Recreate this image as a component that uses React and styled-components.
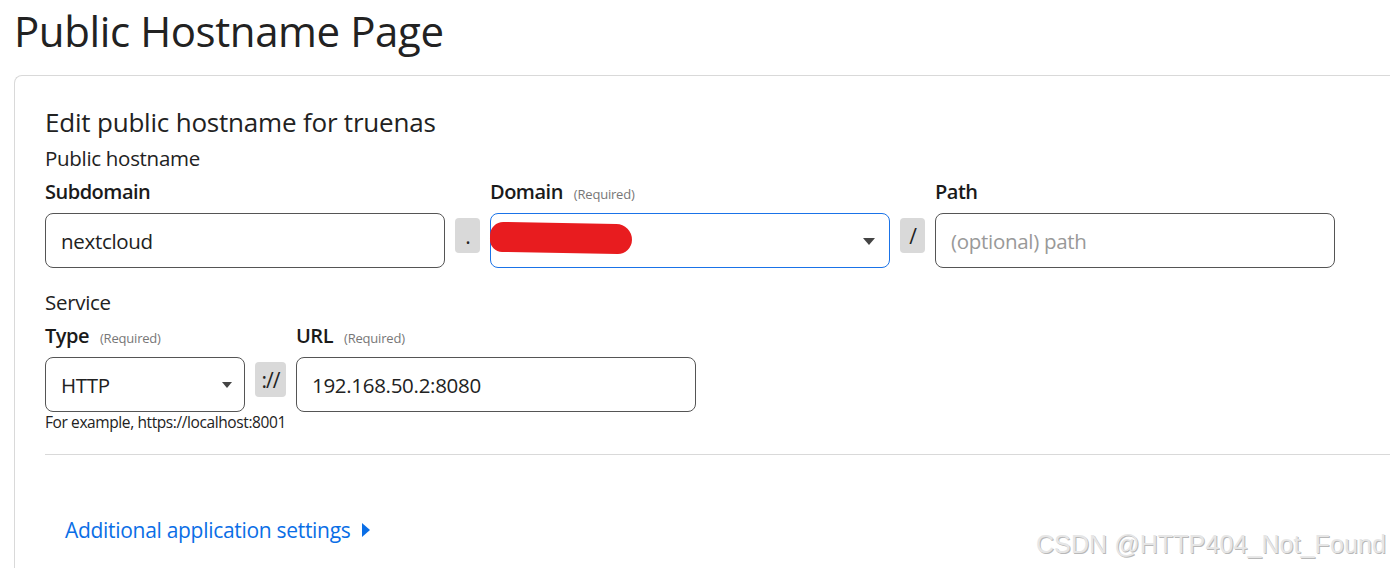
import React from 'react';
import styled, { createGlobalStyle } from 'styled-components';

const GlobalStyle = createGlobalStyle`
  html, body {
    margin: 0;
    padding: 0;
    background: #fff;
    overflow: hidden;
  }
  body {
    font-family: "Open Sans", "Noto Sans", sans-serif;
    color: #222;
  }
`;

const Page = styled.div`
  position: relative;
  width: 1390px;
  height: 568px;
  padding: 0 0 0 14px;
  box-sizing: border-box;
  overflow: hidden;
`;

const Title = styled.h1`
  margin: 0;
  padding: 3px 0 0 0;
  height: 75px;
  box-sizing: border-box;
  font-size: 42px;
  font-weight: 400;
  letter-spacing: -0.4px;
  color: #222;
  line-height: 56px;
`;

const Card = styled.div`
  border: 1px solid #d9d9d9;
  border-right: none;
  border-bottom: none;
  border-top-left-radius: 8px;
  padding: 27px 0 0 30px;
  height: 500px;
  box-sizing: border-box;
`;

const CardTitle = styled.h2`
  margin: 0 0 2px 0;
  font-size: 26px;
  font-weight: 400;
  letter-spacing: -0.2px;
  line-height: 38px;
  color: #222;
`;

const SectionLabel = styled.div`
  margin-top: ${p => p.$top || 0}px;
  font-size: 20.5px;
  line-height: 30px;
  letter-spacing: -0.3px;
  color: #222;
`;

const Row = styled.div`
  display: flex;
  align-items: flex-start;
  gap: 10px;
  margin-top: ${p => p.$top || 0}px;
`;

const Field = styled.div`
  display: flex;
  flex-direction: column;
  width: ${p => p.$w}px;
`;

const Label = styled.label`
  display: flex;
  align-items: baseline;
  gap: 11px;
  height: 28px;
  margin-bottom: 7px;
  font-size: 20px;
  font-weight: 600;
  letter-spacing: -0.5px;
  line-height: 28px;
  color: #1a1a1a;
`;

const Required = styled.span`
  font-size: 13px;
  font-weight: 400;
  letter-spacing: -0.2px;
  color: #777;
`;

const Box = styled.div`
  position: relative;
  display: flex;
  align-items: center;
  height: 55px;
  box-sizing: border-box;
  padding: 0 15px;
  border: 1px solid ${p => (p.$focus ? '#1a73e8' : '#555')};
  border-radius: 8px;
  font-size: 20.5px;
  letter-spacing: -0.3px;
  color: ${p => (p.$placeholder ? '#999' : '#222')};
  background: #fff;
`;

const Caret = styled.span`
  position: absolute;
  right: ${p => p.$right || 14}px;
  top: 50%;
  margin-top: -3px;
  width: 0;
  height: 0;
  border-left: ${p => p.$size || 6}px solid transparent;
  border-right: ${p => p.$size || 6}px solid transparent;
  border-top: ${p => (p.$size || 6) + 1}px solid #444;
`;

const Sep = styled.div`
  align-self: flex-start;
  margin-top: 40px;
  width: ${p => p.$w || 25}px;
  height: 35px;
  box-sizing: border-box;
  border-radius: 4px;
  background: #d9d9d9;
  display: flex;
  align-items: center;
  justify-content: center;
  font-size: 21px;
  color: #222;
  letter-spacing: -1px;
`;

const Redacted = styled.span`
  position: absolute;
  left: -1px;
  top: 9px;
  width: 142px;
  height: 30px;
  border-radius: 15px 18px 16px 14px;
  background: #e81c1f;
  transform: rotate(1deg);
`;

const Hint = styled.div`
  margin-top: 1px;
  font-size: 15.5px;
  line-height: 18px;
  letter-spacing: -0.4px;
  color: #222;
  white-space: nowrap;
`;

const Divider = styled.hr`
  margin: 23px 0 0 0;
  border: none;
  border-top: 1px solid #d9d9d9;
`;

const MoreLink = styled.a`
  display: inline-flex;
  align-items: center;
  gap: 11px;
  margin: 61px 0 0 20px;
  font-size: 21px;
  letter-spacing: -0.3px;
  color: #0a6ee6;
  text-decoration: none;
  cursor: pointer;
`;

const RightTri = styled.span`
  width: 0;
  height: 0;
  border-top: 7px solid transparent;
  border-bottom: 7px solid transparent;
  border-left: 8px solid #0a6ee6;
`;

const Watermark = styled.div`
  position: absolute;
  right: 4px;
  bottom: 9px;
  font-family: "Liberation Sans", Arial, sans-serif;
  font-size: 25px;
  color: #e6e6e6;
  text-shadow: 1px 1px 0 #b8b8b8;
  letter-spacing: 0.1px;
`;

export default function App() {
  return (
    <>
      <GlobalStyle />
      <Page>
        <Title>Public Hostname Page</Title>
        <Card>
          <CardTitle>Edit public hostname for truenas</CardTitle>
          <SectionLabel>Public hostname</SectionLabel>
          <Row $top={5}>
            <Field $w={400}>
              <Label>Subdomain</Label>
              <Box>nextcloud</Box>
            </Field>
            <Sep>.</Sep>
            <Field $w={400}>
              <Label>
                Domain <Required>(Required)</Required>
              </Label>
              <Box $focus>
                <Redacted />
                <Caret $right={14} />
              </Box>
            </Field>
            <Sep>/</Sep>
            <Field $w={400}>
              <Label>Path</Label>
              <Box $placeholder>(optional) path</Box>
            </Field>
          </Row>
          <SectionLabel $top={19}>Service</SectionLabel>
          <Row $top={5}>
            <Field $w={200}>
              <Label>
                Type <Required>(Required)</Required>
              </Label>
              <Box>
                HTTP
                <Caret $right={12} $size={5} />
              </Box>
              <Hint>For example, https://localhost:8001</Hint>
            </Field>
            <Sep $w={31}>://</Sep>
            <Field $w={400}>
              <Label>
                URL <Required>(Required)</Required>
              </Label>
              <Box>192.168.50.2:8080</Box>
            </Field>
          </Row>
          <Divider />
          <MoreLink>
            Additional application settings <RightTri />
          </MoreLink>
        </Card>
        <Watermark>CSDN @HTTP404_Not_Found</Watermark>
      </Page>
    </>
  );
}
